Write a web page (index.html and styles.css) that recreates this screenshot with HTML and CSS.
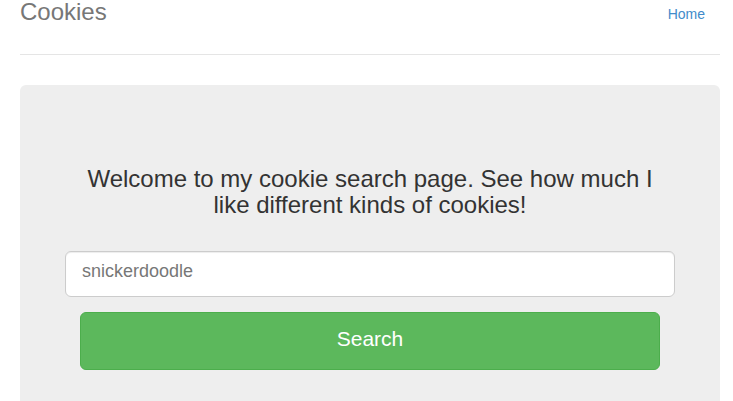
FILE: index.html
```html
<!DOCTYPE html>
<html lang="en">
<head>
<meta charset="utf-8">
<title>Cookies</title>
<link rel="stylesheet" href="styles.css">
</head>
<body>
<div class="container">
  <div class="header">
    <h3 class="title">Cookies</h3>
    <nav class="nav">
      <a class="nav-link" href="#">Home</a>
    </nav>
  </div>
  <div class="jumbotron">
    <h3 class="lead">Welcome to my cookie search page. See how much I like different kinds of cookies!</h3>
    <form class="search-form">
      <div class="input-row">
        <input class="search-input" type="text" placeholder="snickerdoodle">
      </div>
      <button class="search-btn" type="button">Search</button>
    </form>
  </div>
</div>
</body>
</html>
```
FILE: styles.css
```css
* { box-sizing: border-box; }
html, body {
  margin: 0;
  padding: 0;
  background: #fff;
  font-family: "Liberation Sans", Arial, Helvetica, sans-serif;
  color: #333;
  overflow: hidden;
}
.container {
  padding: 0 13px 0 20px;
  width: 733px;
}
.header {
  display: flex;
  justify-content: space-between;
  align-items: flex-start;
  padding-bottom: 30px;
  border-bottom: 1px solid #e5e5e5;
  width: 700px;
}
.title {
  margin: 0;
  font-size: 24px;
  line-height: 24px;
  font-weight: normal;
  color: #777;
}
.nav {
  padding-top: 4px;
}
.nav-link {
  display: block;
  padding: 0 15px;
  font-size: 14px;
  line-height: 20px;
  color: #428bca;
  text-decoration: none;
}
.jumbotron {
  margin-top: 30px;
  width: 700px;
  height: 340px;
  background: #eee;
  border-radius: 6px;
  padding: 81px 60px 0;
}
.lead {
  margin: 0;
  font-size: 24px;
  line-height: 26.4px;
  font-weight: normal;
  text-align: center;
  color: #333;
}
.search-form {
  margin-top: 32px;
  display: flex;
  flex-direction: column;
}
.input-row {
  margin: 0 -15px;
}
.search-input {
  display: block;
  width: 100%;
  height: 46px;
  padding: 8px 16px 12px;
  font-family: "Liberation Sans", Arial, Helvetica, sans-serif;
  font-size: 18px;
  color: #555;
  background: #fff;
  border: 1px solid #ccc;
  border-radius: 6px;
  box-shadow: inset 0 1px 1px rgba(0,0,0,0.075);
  outline: none;
}
.search-input::placeholder {
  color: #777;
  opacity: 1;
}
.search-btn {
  margin-top: 15px;
  height: 58px;
  width: 100%;
  padding: 0 0 4px;
  font-family: "Liberation Sans", Arial, Helvetica, sans-serif;
  font-size: 21px;
  color: #fff;
  background: #5cb85c;
  border: 1px solid #4cae4c;
  border-radius: 6px;
  cursor: pointer;
}
```
